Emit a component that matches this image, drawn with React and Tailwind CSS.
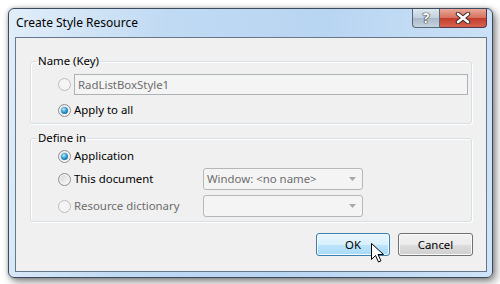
import React from 'react';

const font = "font-['Segoe_UI','Noto_Sans',sans-serif]";

const Radio = ({ checked, disabled }) => (
  <span
    className={
      disabled
        ? 'w-[13px] h-[13px] shrink-0 rounded-full border border-[#bcbcbc] bg-[#f4f4f4] flex items-center justify-center'
        : 'w-[13px] h-[13px] shrink-0 rounded-full border border-[#8e8f8f] bg-[linear-gradient(135deg,#d6d6d6,#fbfbfb)] shadow-[inset_0_0_0_1px_#f4f4f4] flex items-center justify-center'
    }
  >
    {checked && (
      <span className="w-[7px] h-[7px] rounded-full bg-[radial-gradient(circle_at_40%_35%,#b6ecff,#2592c8_50%,#15507d)]" />
    )}
  </span>
);

const Combo = ({ value }) => (
  <div className="w-[160px] h-[22px] rounded-[3px] border border-[#b4b8bb] bg-[#f4f4f4] flex items-center pl-[3px] pr-[6px] text-[#6d6d6d]">
    <span className="flex-1">{value}</span>
    <svg width="7" height="4" viewBox="0 0 7 4">
      <path d="M0 0h7L3.5 4z" fill="#a8a8a8" />
    </svg>
  </div>
);

export default function App() {
  return (
    <div className={`w-[500px] h-[284px] bg-white overflow-hidden relative text-[11.4px] text-black ${font}`}>
      <div className="pl-[8px] pt-[8px]">
        <div className="w-[485px] h-[270px] rounded-[6px] border border-[#3b4a5c] bg-[linear-gradient(100deg,#e2eef9_0%,#c0daf3_30%,#b8d5f1_60%,#cfe4f8_100%)] shadow-[3px_4px_8px_rgba(0,0,0,0.45),0_0_4px_rgba(0,0,0,0.25)] flex flex-col">
          {/* title bar */}
          <div className="h-[28px] flex items-start shrink-0">
            <span className="pl-[7px] pt-[6px] leading-[16px] text-[12px]">Create Style Resource</span>
            <div className="ml-auto mr-[5px] flex">
              <div className="w-[28px] h-[19px] rounded-bl-[4px] border border-[#56677a] border-t-0 bg-[linear-gradient(#dde6ef,#c2cfdc_50%,#a9b8c8_51%,#c6d3e0)] flex items-center justify-center">
                <span className="text-white font-bold text-[14px] leading-none [text-shadow:0_0_1px_#222,0_0_1px_#222,0_0_1px_#222]">?</span>
              </div>
              <div className="w-[47px] h-[19px] rounded-br-[4px] border border-[#56354a] border-t-0 border-l-0 bg-[linear-gradient(#e9a898,#d7715f_48%,#c23d2c_52%,#d6634e)] flex items-center justify-center">
                <svg width="16" height="12" viewBox="0 0 16 12">
                  <path d="M3 2l10 8M13 2l-10 8" stroke="#3a2a2a" strokeWidth="4.5" strokeLinecap="round" />
                  <path d="M3 2l10 8M13 2l-10 8" stroke="#fff" strokeWidth="2.6" strokeLinecap="round" />
                </svg>
              </div>
            </div>
          </div>

          {/* client area */}
          <div className="ml-[6px] w-[472px] h-[235px] border border-[#66778a] bg-[#f0f0f0] flex flex-col">
            <fieldset className="ml-[14px] mt-[16px] w-[442px] border border-[#d5dfe5] rounded-[3px] shadow-[inset_1px_1px_0_#fff,1px_1px_0_#fff] pb-[5px]">
              <legend className="ml-[6px] px-[1px] leading-[14px]">Name (Key)</legend>
              <div className="pl-[27px] pr-[3px]">
                <div className="mt-[6px] h-[21px] flex items-center gap-[3px]">
                  <Radio disabled />
                  <div className="flex-1 h-[21px] border border-[#adb2b5] bg-[#f4f4f4] flex items-center pl-[3px] text-[#6d6d6d]">
                    RadListBoxStyle1
                  </div>
                </div>
                <div className="mt-[7px] h-[16px] flex items-center gap-[3px]">
                  <Radio checked />
                  <span>Apply to all</span>
                </div>
              </div>
            </fieldset>

            <fieldset className="ml-[14px] mt-[7px] w-[442px] border border-[#d5dfe5] rounded-[3px] shadow-[inset_1px_1px_0_#fff,1px_1px_0_#fff] pb-[4px]">
              <legend className="ml-[6px] px-[1px] leading-[14px]">Define in</legend>
              <div className="pl-[27px] pr-[3px]">
                <div className="h-[22px] flex items-center gap-[3px]">
                  <Radio checked />
                  <span>Application</span>
                </div>
                <div className="mt-[1px] h-[22px] flex items-center gap-[3px]">
                  <Radio />
                  <span className="w-[126px]">This document</span>
                  <Combo value="Window: <no name>" />
                </div>
                <div className="mt-[5px] h-[22px] flex items-center gap-[3px]">
                  <Radio disabled />
                  <span className="w-[126px] text-[#6d6d6d]">Resource dictionary</span>
                  <Combo value="" />
                </div>
              </div>
            </fieldset>

            <div className="mt-[11px] ml-[300px] flex gap-[8px] relative">
              <button className="w-[74px] h-[23px] rounded-[3px] border border-[#3c7fb1] bg-[linear-gradient(#eaf6fd,#d9f0fc_50%,#bee6fd_51%,#a7d9f5)] shadow-[inset_0_0_0_1px_#f2fafe]">
                OK
              </button>
              <button className="w-[75px] h-[23px] rounded-[3px] border border-[#707070] bg-[linear-gradient(#f2f2f2,#ebebeb_50%,#dddddd_51%,#cfcfcf)] shadow-[inset_0_0_0_1px_#fafafa]">
                Cancel
              </button>
              <svg className="absolute left-[55px] top-[10px]" width="13" height="20" viewBox="0 0 13 20">
                <path d="M0.5 0.5v16l4-4 3 6.5 2.5-1.2-3-6.3h5.5z" fill="#fff" stroke="#000" strokeWidth="1" strokeLinejoin="miter" />
              </svg>
            </div>
          </div>
        </div>
      </div>
    </div>
  );
}
